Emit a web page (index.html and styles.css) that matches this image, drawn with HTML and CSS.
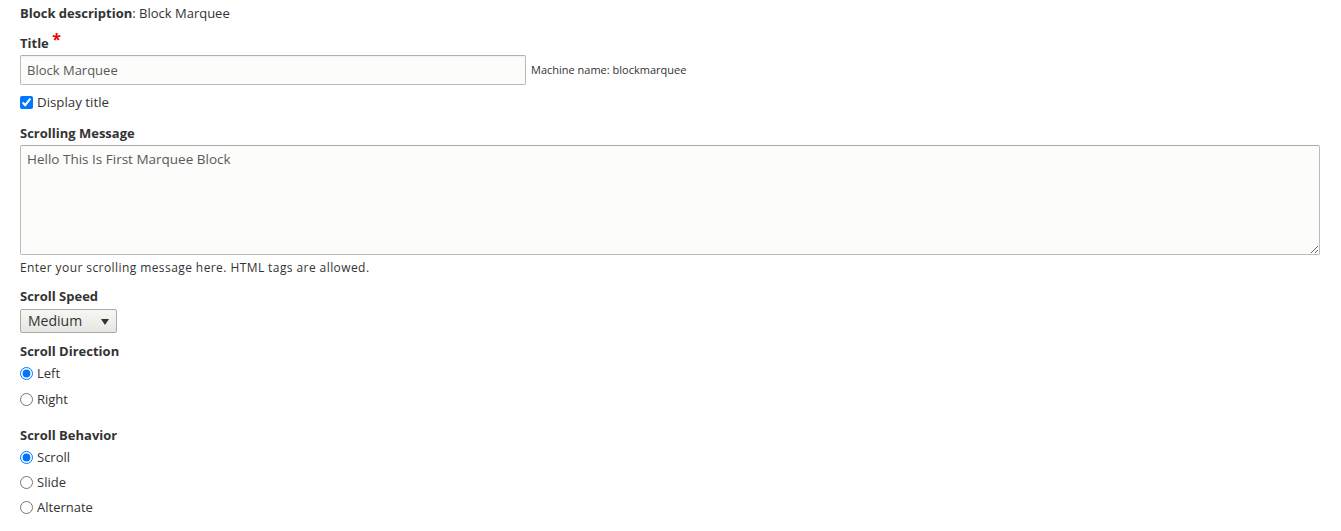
FILE: index.html
```html
<!DOCTYPE html>
<html>
<head>
<meta charset="utf-8">
<link rel="stylesheet" href="styles.css">
</head>
<body>
<form class="form">
  <div class="item item-desc"><span class="label-inline">Block description</span>: Block Marquee</div>

  <div class="item item-title">
    <label class="label">Title <span class="req">*</span></label>
    <div class="input-row">
      <input class="text-input" type="text" value="Block Marquee">
      <span class="machine">Machine name: blockmarquee</span>
    </div>
  </div>

  <div class="item item-check">
    <label class="option"><input type="checkbox" checked> Display title</label>
  </div>

  <div class="item item-msg">
    <label class="label">Scrolling Message</label>
    <textarea class="textarea">Hello This Is First Marquee Block</textarea>
    <div class="help">Enter your scrolling message here. HTML tags are allowed.</div>
  </div>

  <div class="item item-speed">
    <label class="label">Scroll Speed</label>
    <div class="select">Medium<span class="caret"></span></div>
  </div>

  <div class="item item-dir">
    <label class="label">Scroll Direction</label>
    <label class="option radio first"><input type="radio" name="dir" checked> Left</label>
    <label class="option radio"><input type="radio" name="dir"> Right</label>
  </div>

  <div class="item item-beh">
    <label class="label">Scroll Behavior</label>
    <label class="option radio first"><input type="radio" name="beh" checked> Scroll</label>
    <label class="option radio tight"><input type="radio" name="beh"> Slide</label>
    <label class="option radio tight"><input type="radio" name="beh"> Alternate</label>
  </div>
</form>
</body>
</html>
```
FILE: styles.css
```css
html, body {
  margin: 0;
  padding: 0;
  background: #fff;
}
body {
  font-family: "Open Sans", "Noto Sans", sans-serif;
  font-size: 13px;
  color: #333;
}
.form {
  padding: 4px 21px 0 20px;
}
.item {
  line-height: 18px;
}
.label, .label-inline {
  display: block;
  font-weight: 700;
  color: #333;
}
.label-inline {
  display: inline;
}
.req {
  color: #e00;
  font-size: 16px;
  position: relative;
  top: -3px;
}
.item-title { margin-top: 11px; }
.input-row {
  display: flex;
  align-items: center;
  margin-top: 3px;
}
.text-input {
  box-sizing: border-box;
  width: 506px;
  height: 30px;
  border: 1px solid #bbb;
  border-top-color: #b0b0b0;
  border-radius: 2px;
  background: #fcfcfa;
  padding: 0 6px;
  font: inherit;
  font-size: 13px;
  color: #595959;
  box-shadow: inset 0 1px 2px rgba(0,0,0,0.05);
}
.machine {
  margin-left: 5px;
  font-size: 11px;
  color: #333;
}
.item-check { margin-top: 8px; }
.option {
  display: flex;
  align-items: center;
  color: #333;
}
.option input {
  margin: 0 4px 0 0;
  width: 13px;
  height: 13px;
}
.item-check .option { font-size: 13.3px; }
.item-msg { margin-top: 13px; }
.textarea {
  display: block;
  box-sizing: border-box;
  width: 100%;
  height: 110px;
  margin-top: 3px;
  border: 1px solid #bbb;
  border-top-color: #aaa;
  border-radius: 2px;
  background: #fcfcfa;
  padding: 5px 6px;
  font: inherit;
  font-size: 13.5px;
  line-height: 17px;
  color: #595959;
  resize: vertical;
}
.help {
  margin-top: 4px;
  font-size: 12px;
  color: #333;
  letter-spacing: 0.42px;
}
.item-speed { margin-top: 10px; }
.select {
  position: relative;
  box-sizing: border-box;
  width: 97px;
  height: 24px;
  margin-top: 4px;
  border: 1px solid #aaa;
  border-radius: 2px;
  background: linear-gradient(#f6f6f3, #e6e6e2);
  padding: 0 7px;
  line-height: 22px;
  font-size: 14px;
  color: #333;
}
.caret {
  position: absolute;
  right: 7px;
  top: 9px;
  width: 0;
  height: 0;
  border-left: 4px solid transparent;
  border-right: 4px solid transparent;
  border-top: 6px solid #333;
}
.item-dir { margin-top: 9px; }
.radio { margin-top: 8px; }
.radio.first { margin-top: 4px; }
.radio.tight { margin-top: 7px; }
.item-beh { margin-top: 18px; }
```
